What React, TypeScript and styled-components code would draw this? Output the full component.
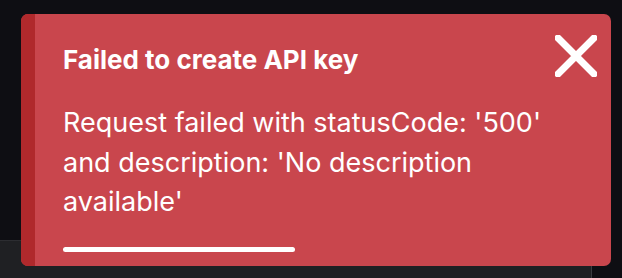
import React from "react";
import styled, { createGlobalStyle } from "styled-components";

const Global = createGlobalStyle`
  html, body { margin: 0; padding: 0; background: #0e0e13; }
  body { width: 622px; height: 278px; overflow: hidden; font-family: Inter, "Noto Sans", sans-serif; }
`;

const Page = styled.div`
  position: relative;
  width: 622px;
  height: 278px;
  background: #0e0e13;
`;

const Footer = styled.div`
  position: absolute;
  left: 0;
  top: 240px;
  width: 591px;
  height: 38px;
  background: #1f2023;
  border-top: 1px solid #2c2d31;
  border-right: 1px solid #3a3b40;
`;

const Toast = styled.div`
  position: absolute;
  left: 21px;
  top: 14px;
  width: 590px;
  height: 252px;
  display: flex;
  border-radius: 7px;
  overflow: hidden;
  background: #c9464d;
  color: #ffffff;
`;

const Stripe = styled.div`
  width: 14px;
  flex: none;
  background: #b0292c;
`;

const Body = styled.div`
  flex: 1;
  display: flex;
  flex-direction: column;
  padding: 30px 0 0 28px;
`;

const Title = styled.div`
  font-size: 26px;
  font-weight: 700;
  line-height: 32px;
`;

const Message = styled.div`
  margin-top: 27px;
  max-width: 500px;
  font-size: 27px;
  font-weight: 400;
  line-height: 39.5px;
`;

const Progress = styled.div`
  margin-top: 25px;
  width: 232px;
  height: 5px;
  border-radius: 3px;
  background: #ffffff;
`;

const Close = styled.button`
  flex: none;
  align-self: flex-start;
  margin: 21px 14px 0 0;
  width: 42px;
  height: 42px;
  padding: 0;
  border: 0;
  background: transparent;
  cursor: pointer;
  display: flex;
`;

export default function App() {
  return (
    <Page>
      <Global />
      <Footer />
      <Toast>
        <Stripe />
        <Body>
          <Title>Failed to create API key</Title>
          <Message>
            Request failed with statusCode: '500' and description: 'No description available'
          </Message>
          <Progress />
        </Body>
        <Close aria-label="Close">
          <svg width="42" height="42" viewBox="0 0 42 42">
            <path d="M3 3 L39 39 M39 3 L3 39" stroke="#fff" strokeWidth="7" strokeLinecap="square" fill="none" />
          </svg>
        </Close>
      </Toast>
    </Page>
  );
}
